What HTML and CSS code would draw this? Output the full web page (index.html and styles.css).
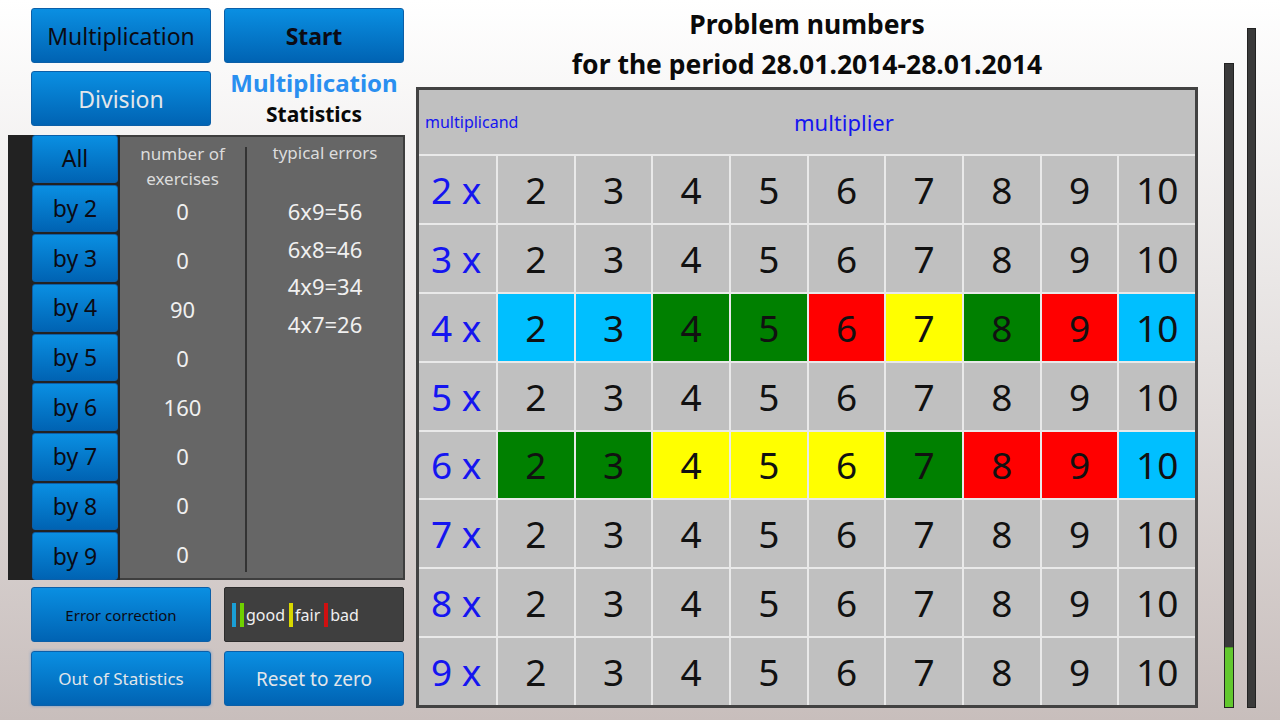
FILE: index.html
```html
<!DOCTYPE html>
<html lang="en">
<head>
    <meta charset="UTF-8">
    <title>Multiplication Statistics</title>
    <link rel="stylesheet" href="styles.css">
</head>
<body>
    <div class="left">
        <div class="top-buttons">
            <button class="btn dark-text">Multiplication</button>
            <button class="btn dark-text bold">Start</button>
            <button class="btn">Division</button>
            <div class="caption">
                <span class="caption-mode">Multiplication</span>
                <span class="caption-title">Statistics</span>
            </div>
        </div>

        <div class="stats">
            <div class="strip"></div>
            <div class="by-list">
                <button class="by">All</button>
                <button class="by">by 2</button>
                <button class="by">by 3</button>
                <button class="by">by 4</button>
                <button class="by">by 5</button>
                <button class="by">by 6</button>
                <button class="by">by 7</button>
                <button class="by">by 8</button>
                <button class="by">by 9</button>
            </div>
            <div class="counts">
                <div class="count head">number of<br>exercises</div>
                <div class="count">0</div>
                <div class="count">0</div>
                <div class="count">90</div>
                <div class="count">0</div>
                <div class="count">160</div>
                <div class="count">0</div>
                <div class="count">0</div>
                <div class="count">0</div>
            </div>
            <div class="errors">
                <div class="errors-head">typical errors</div>
                <div class="error">6x9=56</div>
                <div class="error">6x8=46</div>
                <div class="error">4x9=34</div>
                <div class="error">4x7=26</div>
            </div>
        </div>

        <div class="bottom-buttons">
            <button class="btn small dark-text">Error correction</button>
            <div class="legend">
                <span class="mark blue"></span><span class="mark green"></span>good
                <span class="mark yellow"></span>fair
                <span class="mark red"></span>bad
            </div>
            <button class="btn small-2">Out of Statistics</button>
            <button class="btn small-3">Reset to zero</button>
        </div>
    </div>

    <div class="middle">
        <h1 class="title">Problem numbers<br>for the period 28.01.2014-28.01.2014</h1>
        <div class="table-frame">
            <div class="table" id="table">
                <div class="head-cell">
                    <span class="multiplicand">multiplicand</span>
                    <span class="multiplier">multiplier</span>
                </div>
            </div>
        </div>
    </div>

    <div class="meters">
        <div class="meter short"><div class="meter-fill"></div></div>
        <div class="meter tall"></div>
    </div>

    <script>
        const colors = {
            4: ['c', 'c', 'g', 'g', 'r', 'y', 'g', 'r', 'c'],
            6: ['g', 'g', 'y', 'y', 'y', 'g', 'r', 'r', 'c']
        };
        const table = document.getElementById('table');
        for (let row = 2; row <= 9; row++) {
            const label = document.createElement('div');
            label.className = 'cell label';
            label.textContent = row + ' x';
            table.appendChild(label);
            for (let col = 2; col <= 10; col++) {
                const cell = document.createElement('div');
                cell.className = 'cell';
                if (colors[row]) cell.classList.add(colors[row][col - 2]);
                cell.textContent = col;
                table.appendChild(cell);
            }
        }
    </script>
</body>
</html>
```

FILE: styles.css
```css
:root {
    --btn-top: #0a8fe2;
    --btn-bottom: #0063b3;
    --btn-border: #0b5fa8;
    --panel: #666;
    --cell: #c0c0c0;
    --grid-line: #e9e9e9;
    --blue-text: #1515f0;
}

* {
    box-sizing: border-box;
}

body {
    margin: 0;
    width: 1280px;
    height: 720px;
    overflow: hidden;
    display: flex;
    align-items: flex-start;
    font-family: "Noto Sans", "Open Sans", sans-serif;
    background: linear-gradient(to bottom, #ffffff 0%, #e4e0df 50%, #c8bebc 100%);
}

button {
    font-family: inherit;
}

.btn {
    height: 55px;
    border: 1px solid var(--btn-border);
    border-radius: 3px;
    background: linear-gradient(to bottom, var(--btn-top), var(--btn-bottom));
    color: #e2e6ea;
    font-size: 23px;
    padding: 0;
}

.dark-text {
    color: #0b0b14;
}

.bold {
    font-weight: bold;
}

/* left column */

.left {
    width: 397px;
    margin: 8px 0 0 8px;
    display: flex;
    flex-direction: column;
}

.top-buttons,
.bottom-buttons {
    margin-left: 23px;
    display: grid;
    grid-template-columns: 180px 180px;
    grid-auto-rows: 55px;
    column-gap: 13px;
    row-gap: 8px;
}

.caption {
    display: flex;
    flex-direction: column;
    align-items: center;
    font-weight: bold;
}

.caption-mode {
    color: #2a8ff0;
    font-size: 24px;
    line-height: 24px;
}

.caption-title {
    color: #080808;
    font-size: 21px;
    line-height: 24px;
    margin-top: 7px;
}

.stats {
    margin-top: 9px;
    height: 445px;
    display: grid;
    grid-template-columns: 24px 88px 125px 1fr;
    grid-template-rows: minmax(0, 1fr);
    background: var(--panel);
    border: 2px solid #3e3e3e;
    border-left: 0;
}

.strip {
    background: #222;
    margin-top: -2px;
    margin-bottom: -2px;
}

.by-list {
    display: flex;
    flex-direction: column;
    gap: 2px;
    background: #222;
    margin-top: -2px;
    margin-bottom: -2px;
    padding-right: 2px;
    min-height: 0;
}

.by {
    flex: 1 1 0;
    min-height: 0;
    border: 1px solid var(--btn-border);
    border-radius: 3px;
    background: linear-gradient(to bottom, var(--btn-top), var(--btn-bottom));
    color: #0b0b14;
    font-size: 23px;
    line-height: 1;
    padding: 0;
}

.counts {
    display: grid;
    grid-template-rows: repeat(9, minmax(0, 1fr));
    color: #f0f0f0;
    font-size: 22px;
    min-height: 0;
}

.count {
    display: flex;
    align-items: center;
    justify-content: center;
    min-height: 0;
}

.count.head {
    align-items: flex-start;
    text-align: center;
    font-size: 17px;
    line-height: 25px;
    color: #dcdcdc;
    padding-top: 4px;
}

.errors {
    margin: 10px 0 6px;
    border-left: 2px solid #333;
    display: flex;
    flex-direction: column;
    align-items: center;
    color: #f0f0f0;
    font-size: 22px;
}

.errors-head {
    font-size: 17px;
    color: #dcdcdc;
    line-height: 20px;
    margin-top: -4px;
    margin-bottom: 30px;
}

.error {
    line-height: 37.7px;
}

.bottom-buttons {
    margin-top: 7px;
}

.small {
    font-size: 15px;
}

.small-2 {
    font-size: 17px;
    margin-top: 1px;
    box-shadow: 0 0 3px rgba(0, 110, 220, 0.5);
}

.small-3 {
    font-size: 19px;
    margin-top: 1px;
}

.legend {
    height: 55px;
    background: #3f3f3f;
    border: 1px solid #2c2c2c;
    border-radius: 2px;
    display: flex;
    align-items: center;
    padding-left: 4px;
    color: #f0f0f0;
    font-size: 16px;
}

.mark {
    display: inline-block;
    width: 4px;
    height: 24px;
    margin: 0 2px 0 3px;
}

.mark.blue { background: #1a9fd5; }
.mark.green { background: #6fd000; margin-left: 2px; }
.mark.yellow { background: #d8d800; margin-left: 4px; }
.mark.red { background: #d01010; margin-left: 4px; }

/* middle: table */

.middle {
    width: 782px;
    margin-left: 11px;
}

.title {
    margin: 4px 0 0;
    text-align: center;
    font-size: 26.5px;
    line-height: 40px;
    color: #0a0a0a;
}

.table-frame {
    margin-top: 3px;
    height: 621px;
    border: 3px solid #424242;
    background: var(--cell);
}

.table {
    height: 100%;
    display: grid;
    grid-template-columns: 77px repeat(9, 1fr);
    grid-template-rows: 64px repeat(8, 1fr);
    gap: 2px;
    background: var(--grid-line);
}

.head-cell {
    grid-column: 1 / -1;
    background: var(--cell);
    display: flex;
    align-items: center;
    color: var(--blue-text);
}

.multiplicand {
    width: 375px;
    padding-left: 6px;
    font-size: 16px;
}

.multiplier {
    font-size: 22px;
}

.cell {
    background: var(--cell);
    display: flex;
    align-items: center;
    justify-content: center;
    font-size: 37px;
    color: #111;
}

.cell.label {
    color: var(--blue-text);
    justify-content: flex-start;
    padding-left: 12px;
}

.cell.c { background: #00bfff; }
.cell.g { background: #008000; }
.cell.r { background: #ff0000; }
.cell.y { background: #ffff00; }

/* right: meters */

.meters {
    margin-left: 26px;
    height: 708px;
    display: flex;
    gap: 13px;
    align-items: flex-end;
}

.meter {
    width: 10px;
    background: #3a3a3a;
    border: 1px solid #222;
    display: flex;
    align-items: flex-end;
}

.meter.short {
    height: 645px;
}

.meter.tall {
    height: 680px;
    width: 9px;
}

.meter-fill {
    width: 100%;
    height: 60px;
    background: #62c82e;
    border-top: 1px solid #4a9a20;
}
```
